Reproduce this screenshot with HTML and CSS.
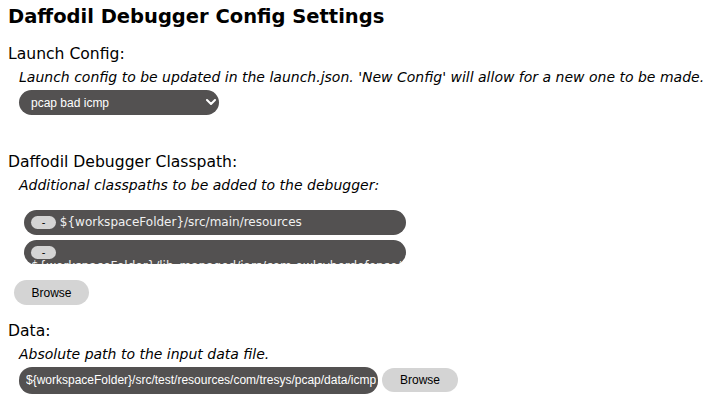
FILE: index.html
```html
<!DOCTYPE html>
<html lang="en">
<head>
<meta charset="utf-8">
<title>Daffodil Debugger Config Settings</title>
<link rel="stylesheet" href="styles.css">
</head>
<body>
  <h2 class="title">Daffodil Debugger Config Settings</h2>

  <section class="setting">
    <div class="label">Launch Config:</div>
    <p class="desc">Launch config to be updated in the launch.json. 'New Config' will allow for a new one to be made.</p>
    <div class="select-wrap">
      <select class="select">
        <option>pcap bad icmp</option>
        <option>New Config</option>
      </select>
      <svg class="chevron" viewBox="0 0 10 6" width="10" height="6" aria-hidden="true">
        <path d="M1 1 L5 5 L9 1" fill="none" stroke="#ffffff" stroke-width="2" stroke-linecap="round" stroke-linejoin="round"/>
      </svg>
    </div>
  </section>

  <section class="setting classpath">
    <div class="label">Daffodil Debugger Classpath:</div>
    <p class="desc">Additional classpaths to be added to the debugger:</p>
    <ul class="cp-list">
      <li class="cp-item"><button class="minus">-</button> ${workspaceFolder}/src/main/resources</li>
      <li class="cp-item"><button class="minus">-</button> ${workspaceFolder}/lib_managed/jars/com.owlcyberdefense/daffodil-runtime1_2.13.jar</li>
    </ul>
    <button class="browse browse-cp">Browse</button>
  </section>

  <section class="setting data">
    <div class="label">Data:</div>
    <p class="desc">Absolute path to the input data file.</p>
    <div class="input-row">
      <input class="path-input" type="text" value="${workspaceFolder}/src/test/resources/com/tresys/pcap/data/icmp.cap">
      <button class="browse">Browse</button>
    </div>
  </section>
</body>
</html>
```

FILE: styles.css
```css
html, body {
  background: #ffffff;
}

body {
  margin: 0;
  padding: 0 8px;
  font-family: "DejaVu Sans", sans-serif;
  font-size: 13px;
  color: #000000;
}

.title {
  font-size: 19.5px;
  font-weight: bold;
  margin: 5px 0 0;
  line-height: normal;
}

.setting {
  margin-top: 17px;
}

.classpath {
  margin-top: 38px;
}

.label {
  font-size: 15.6px;
  line-height: normal;
}

.desc {
  font-style: italic;
  font-size: 14px;
  margin: 6px 0 0;
  padding-left: 11px;
  line-height: normal;
}

.select-wrap {
  position: relative;
  width: 200px;
  margin: 5px 0 0 11px;
}

.select {
  appearance: none;
  -webkit-appearance: none;
  display: block;
  width: 200px;
  height: 25px;
  border: none;
  border-radius: 13px;
  background: #535151;
  color: #ffffff;
  font-family: "Liberation Sans", Arial, sans-serif;
  font-size: 12px;
  padding: 0 20px 0 12px;
  outline: none;
}

.chevron {
  position: absolute;
  right: 3px;
  top: 9px;
  pointer-events: none;
}

.cp-list {
  list-style: none;
  margin: 17px 0 0 16px;
  padding: 0;
  width: 382px;
  height: 54px;
  overflow: hidden;
  display: flex;
  flex-direction: column;
  gap: 5px;
}

.cp-item {
  flex: none;
  height: 25px;
  box-sizing: border-box;
  padding: 5px 8px 0 7px;
  border-radius: 13px;
  background: #535151;
  color: #f0f0f0;
  font-size: 12px;
  overflow: hidden;
  line-height: normal;
}

.minus {
  display: inline-block;
  vertical-align: middle;
  width: 25px;
  height: 13px;
  padding: 0;
  border: none;
  border-radius: 7px;
  background: #d4d4d4;
  color: #000000;
  font-family: "Liberation Sans", Arial, sans-serif;
  font-size: 11px;
  line-height: 13px;
  text-align: center;
}

.browse {
  display: block;
  width: 75px;
  height: 25px;
  padding: 0;
  border: none;
  border-radius: 13px;
  background: #d4d4d4;
  color: #000000;
  font-family: "Liberation Sans", Arial, sans-serif;
  font-size: 12px;
}

.browse-cp {
  margin: 16px 0 0 6px;
}

.input-row {
  display: flex;
  align-items: center;
  gap: 4px;
  margin: 4.5px 0 0 11px;
}

.path-input {
  width: 359px;
  height: 27px;
  box-sizing: border-box;
  border: none;
  border-radius: 13px;
  background: #535151;
  color: #ffffff;
  font-family: "Liberation Sans", Arial, sans-serif;
  font-size: 12px;
  padding: 0 2px 0 7px;
  outline: none;
}

.input-row .browse {
  width: 76px;
  height: 24px;
}
```
